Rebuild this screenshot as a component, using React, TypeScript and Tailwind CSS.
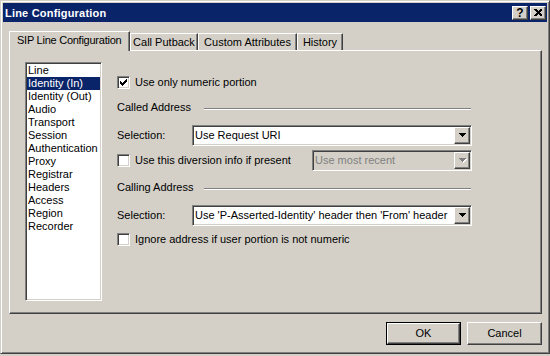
import React from 'react';

// classic Win2000 3D edges
const raised =
  'border border-t-white border-l-white border-r-[#404040] border-b-[#404040] shadow-[inset_-1px_-1px_#808080]';
const sunken =
  'border border-t-[#808080] border-l-[#808080] border-r-white border-b-white shadow-[inset_1px_1px_#404040,inset_-1px_-1px_#d4d0c8]';

const categories = [
  'Line',
  'Identity (In)',
  'Identity (Out)',
  'Audio',
  'Transport',
  'Session',
  'Authentication',
  'Proxy',
  'Registrar',
  'Headers',
  'Access',
  'Region',
  'Recorder',
];

function CheckBox({ checked, label }: { checked?: boolean; label: string }) {
  return (
    <div className="flex items-center h-[13px]">
      <div className={`w-[13px] h-[13px] bg-white shrink-0 flex items-center justify-center ${sunken}`}>
        {checked && (
          <svg width="7" height="7" viewBox="0 0 7 7" shapeRendering="crispEdges">
            <path d="M6 0h1v3h-1v1h-1v1h-1v1h-1v1h-1v-1h-1v-1h-1v-3h1v1h1v1h1v-1h1v-1h1z" fill="#000" />
          </svg>
        )}
      </div>
      <span className="ml-[5px] whitespace-nowrap">{label}</span>
    </div>
  );
}

function Arrow({ disabled }: { disabled?: boolean }) {
  return (
    <svg width="8" height="5" viewBox="0 0 8 5" shapeRendering="crispEdges">
      {disabled && <path d="M1 1h7l-3.5 4z" fill="#fff" />}
      <path d="M0 0h7l-3.5 4z" fill={disabled ? '#808080' : '#000'} />
    </svg>
  );
}

function Combo({ text, className, disabled }: { text: string; className: string; disabled?: boolean }) {
  return (
    <div
      className={`h-[21px] p-px flex items-center ${sunken} ${disabled ? 'bg-[#d4d0c8] text-[#808080]' : 'bg-white'} ${className}`}
    >
      <span className="flex-1 pl-px whitespace-nowrap overflow-hidden">{text}</span>
      <div className={`w-[16px] h-[17px] bg-[#d4d0c8] flex items-center justify-center pl-px ${raised}`}>
        <Arrow disabled={disabled} />
      </div>
    </div>
  );
}

function Header({ title }: { title: string }) {
  return (
    <div className="flex items-start h-[13px]">
      <span className="w-[87px] whitespace-nowrap">{title}</span>
      <div className="w-[267px] mt-[7px] border-t border-t-[#808080] border-b border-b-white" />
    </div>
  );
}

function TitleButton({ children }: { children: React.ReactNode }) {
  return (
    <div className={`w-[16px] h-[14px] bg-[#d4d0c8] flex items-center justify-center ${raised}`}>{children}</div>
  );
}

function DialogButton({ label, isDefault }: { label: string; isDefault?: boolean }) {
  return (
    <div className={`w-[75px] h-[23px] ${isDefault ? 'border border-black' : ''}`}>
      <div className={`w-full h-full bg-[#d4d0c8] flex items-center justify-center ${raised}`}>{label}</div>
    </div>
  );
}

export default function App() {
  return (
    <div className="w-[550px] h-[356px] bg-[#d4d0c8] overflow-hidden text-[11px] leading-[13px] text-black font-['Liberation_Sans',Arial,sans-serif]">
      <div className="w-[550px] h-[354px] p-[2px] flex flex-col border border-t-[#d4d0c8] border-l-[#d4d0c8] border-r-[#404040] border-b-[#404040] shadow-[inset_1px_1px_#fff,inset_-1px_-1px_#808080]">
        {/* title bar */}
        <div className="h-[19px] bg-[#0a246a] flex items-center justify-between pl-[2px] pr-[1px]">
          <span className="font-bold text-white mt-[2px] tracking-[0.2px]">Line Configuration</span>
          <div className="flex gap-[2px]">
            <TitleButton>
              <span className="font-bold text-[12px] leading-[12px] mt-px">?</span>
            </TitleButton>
            <TitleButton>
              <svg width="8" height="7" viewBox="0 0 8 7" shapeRendering="crispEdges">
                <path d="M0 0h2l2 2 2-2h2v1l-2.5 2.5 2.5 2.5v1h-2l-2-2-2 2h-2v-1l2.5-2.5-2.5-2.5z" fill="#000" />
              </svg>
            </TitleButton>
          </div>
        </div>

        <div className="pt-[9px] pl-[6px] pr-[5px] flex flex-col">
          {/* tabs */}
          <div className="flex items-end h-[19px]">
            <div className="relative z-10 h-[20px] -mb-px w-[121px] bg-[#d4d0c8] pl-[7px] pt-[2px] border-l border-t border-r border-l-white border-t-white border-r-[#404040] shadow-[inset_-1px_0_#808080] whitespace-nowrap tracking-[-0.25px]">
              SIP Line Configuration
            </div>
            {[
              ['Call Putback', 'w-[68px]'],
              ['Custom Attributes', 'w-[99px]'],
              ['History', 'w-[46px]'],
            ].map(([t, w]) => (
              <div
                key={t}
                className={`h-[17px] ${w} flex justify-center pt-[2px] border-l border-t border-r border-l-white border-t-white border-r-[#404040] shadow-[inset_-1px_0_#808080] whitespace-nowrap`}
              >
                {t}
              </div>
            ))}
          </div>

          {/* tab page */}
          <div className={`h-[264px] flex items-start ${raised}`}>
            <div className={`ml-[15px] mt-[11px] w-[77px] h-[239px] bg-white p-px ${sunken}`}>
              {categories.map((c, i) => (
                <div
                  key={c}
                  className={`h-[13px] pl-px whitespace-nowrap ${i === 1 ? 'bg-[#0a246a] text-white' : ''}`}
                >
                  {c}
                </div>
              ))}
            </div>

            <div className="ml-[15px] mt-[25px] w-[355px] flex flex-col">
              <CheckBox checked label="Use only numeric portion" />

              <div className="mt-[12px]">
                <Header title="Called Address" />
              </div>

              <div className="mt-[11px] flex items-center">
                <span className="w-[75px]">Selection:</span>
                <Combo text="Use Request URI" className="w-[280px]" />
              </div>

              <div className="mt-[4px] flex items-center justify-between">
                <CheckBox label="Use this diversion info if present" />
                <Combo text="Use most recent" className="w-[160px]" disabled />
              </div>

              <div className="mt-[10px]">
                <Header title="Calling Address" />
              </div>

              <div className="mt-[11px] flex items-center">
                <span className="w-[75px]">Selection:</span>
                <Combo text="Use 'P-Asserted-Identity' header then 'From' header" className="w-[280px]" />
              </div>

              <div className="mt-[7px]">
                <CheckBox label="Ignore address if user portion is not numeric" />
              </div>
            </div>
          </div>

          {/* dialog buttons */}
          <div className="mt-[8px] flex justify-end gap-[6px]">
            <DialogButton label="OK" isDefault />
            <DialogButton label="Cancel" />
          </div>
        </div>
      </div>
    </div>
  );
}
